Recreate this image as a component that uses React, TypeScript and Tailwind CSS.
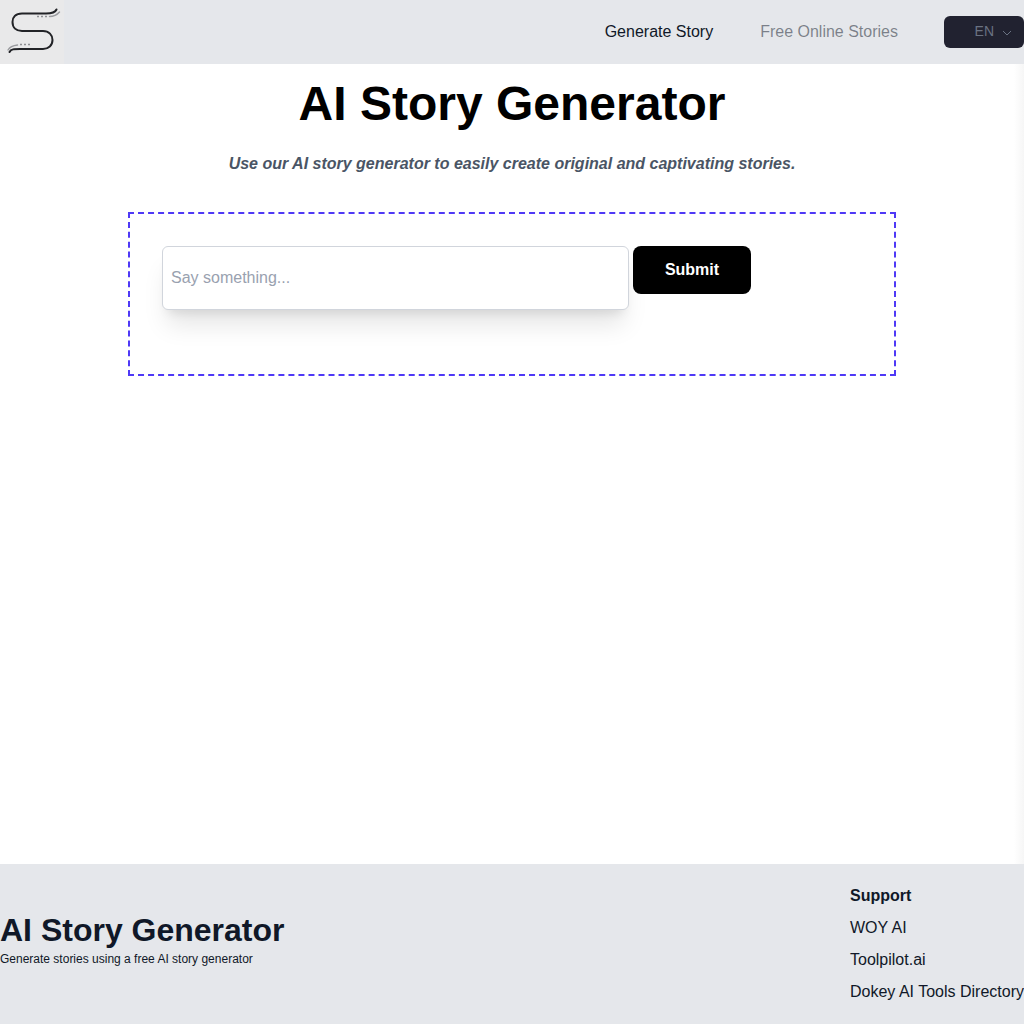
const font = "font-['Liberation_Sans',Arial,sans-serif]";

const Logo = () => (
  <div className="w-16 h-16 bg-[#e9e9ea] shrink-0">
    <svg viewBox="0 0 64 64" className="w-16 h-16" fill="none">
      <path d="M56.500 9.500 C55 13 51 13.500 46 13.500 L22 13.500 C15.500 13.500 12.500 17.500 12.500 22 C12.500 27.500 16 31 22 31 L43 31 C49 31 52.500 35 52.500 40 C52.500 45.500 48.500 49 43 49 L20 49 C14 49 11 49 9.500 52" stroke="#222327" strokeWidth="2" strokeLinecap="round" />
      <path d="M59.500 12 C56.500 15.500 53.500 16.500 49.500 16.500" stroke="#9a9b9f" strokeWidth="1.400" strokeLinecap="round" />
      <path d="M8 50 C10 46.500 13 45.500 17.500 45" stroke="#9a9b9f" strokeWidth="1.400" strokeLinecap="round" />
      <path d="M37 16.500 H48" stroke="#8f9094" strokeWidth="1.600" strokeDasharray="2 2" />
      <path d="M20 44.500 H31" stroke="#8f9094" strokeWidth="1.600" strokeDasharray="2 2" />
    </svg>
  </div>
);

const App = () => {
  return (
    <div className={`${font} relative bg-white min-h-[1024px] flex flex-col text-black`}>
      <header className="h-16 bg-gray-200 flex items-center justify-between">
        <Logo />
        <nav className="flex items-center">
          <a className="text-base text-gray-900 mr-[47px] -mt-[1px]">Generate Story</a>
          <a className="text-base text-gray-900/50 mr-[46px] -mt-[1px]">Free Online Stories</a>
          <div className="w-20 h-8 bg-[#212230] rounded-md flex items-center justify-end pr-[12px] text-gray-500">
            <span className="text-sm -mt-[3px]">EN</span>
            <svg viewBox="0 0 10 6" className="w-[10px] h-[6px] ml-2 mt-[1px]" fill="none" stroke="currentColor" strokeWidth="1">
              <path d="M1 1 L5 5 L9 1" />
            </svg>
          </div>
        </nav>
      </header>

      <main className="flex-1 h-[800px] flex flex-col items-center">
        <h1 className="text-5xl font-bold mt-[16px] leading-[48px]">AI Story Generator</h1>
        <p className="mt-[24px] text-base italic font-semibold leading-6 text-gray-600">
          Use our AI story generator to easily create original and captivating stories.
        </p>
        <div className="mt-[36px] w-[768px] h-[164px] border-2 border-dashed border-indigo-600 p-8 flex items-start">
          <div className="w-[467px] h-16 bg-white border border-gray-300 rounded-md shadow-xl flex items-center px-2 text-base text-gray-400">
            <span className="-mt-[1px]">Say something...</span>
          </div>
          <button className="ml-1 w-[118px] h-12 bg-black text-white font-bold text-base rounded-lg">Submit</button>
        </div>
      </main>

      <footer className="h-40 bg-gray-200 flex justify-between">
        <div className="mt-[48px]">
          <div className="text-[32px] leading-9 font-bold text-gray-900">AI Story Generator</div>
          <div className="text-xs mt-[3px] leading-4 text-gray-900">Generate stories using a free AI story generator</div>
        </div>
        <div className="pt-[20px] text-base text-gray-900 flex flex-col gap-2">
          <div className="font-bold leading-6">Support</div>
          <div className="leading-6">WOY AI</div>
          <div className="leading-6">Toolpilot.ai</div>
          <div className="leading-6">Dokey AI Tools Directory</div>
        </div>
      </footer>

      {/* faint edge shadow down the right side of the main area */}
      <div className="absolute right-0 top-16 bottom-40 w-[10px] pointer-events-none bg-linear-to-r from-white/0 to-[#f6f6f6]" />
    </div>
  );
};

export default App;
